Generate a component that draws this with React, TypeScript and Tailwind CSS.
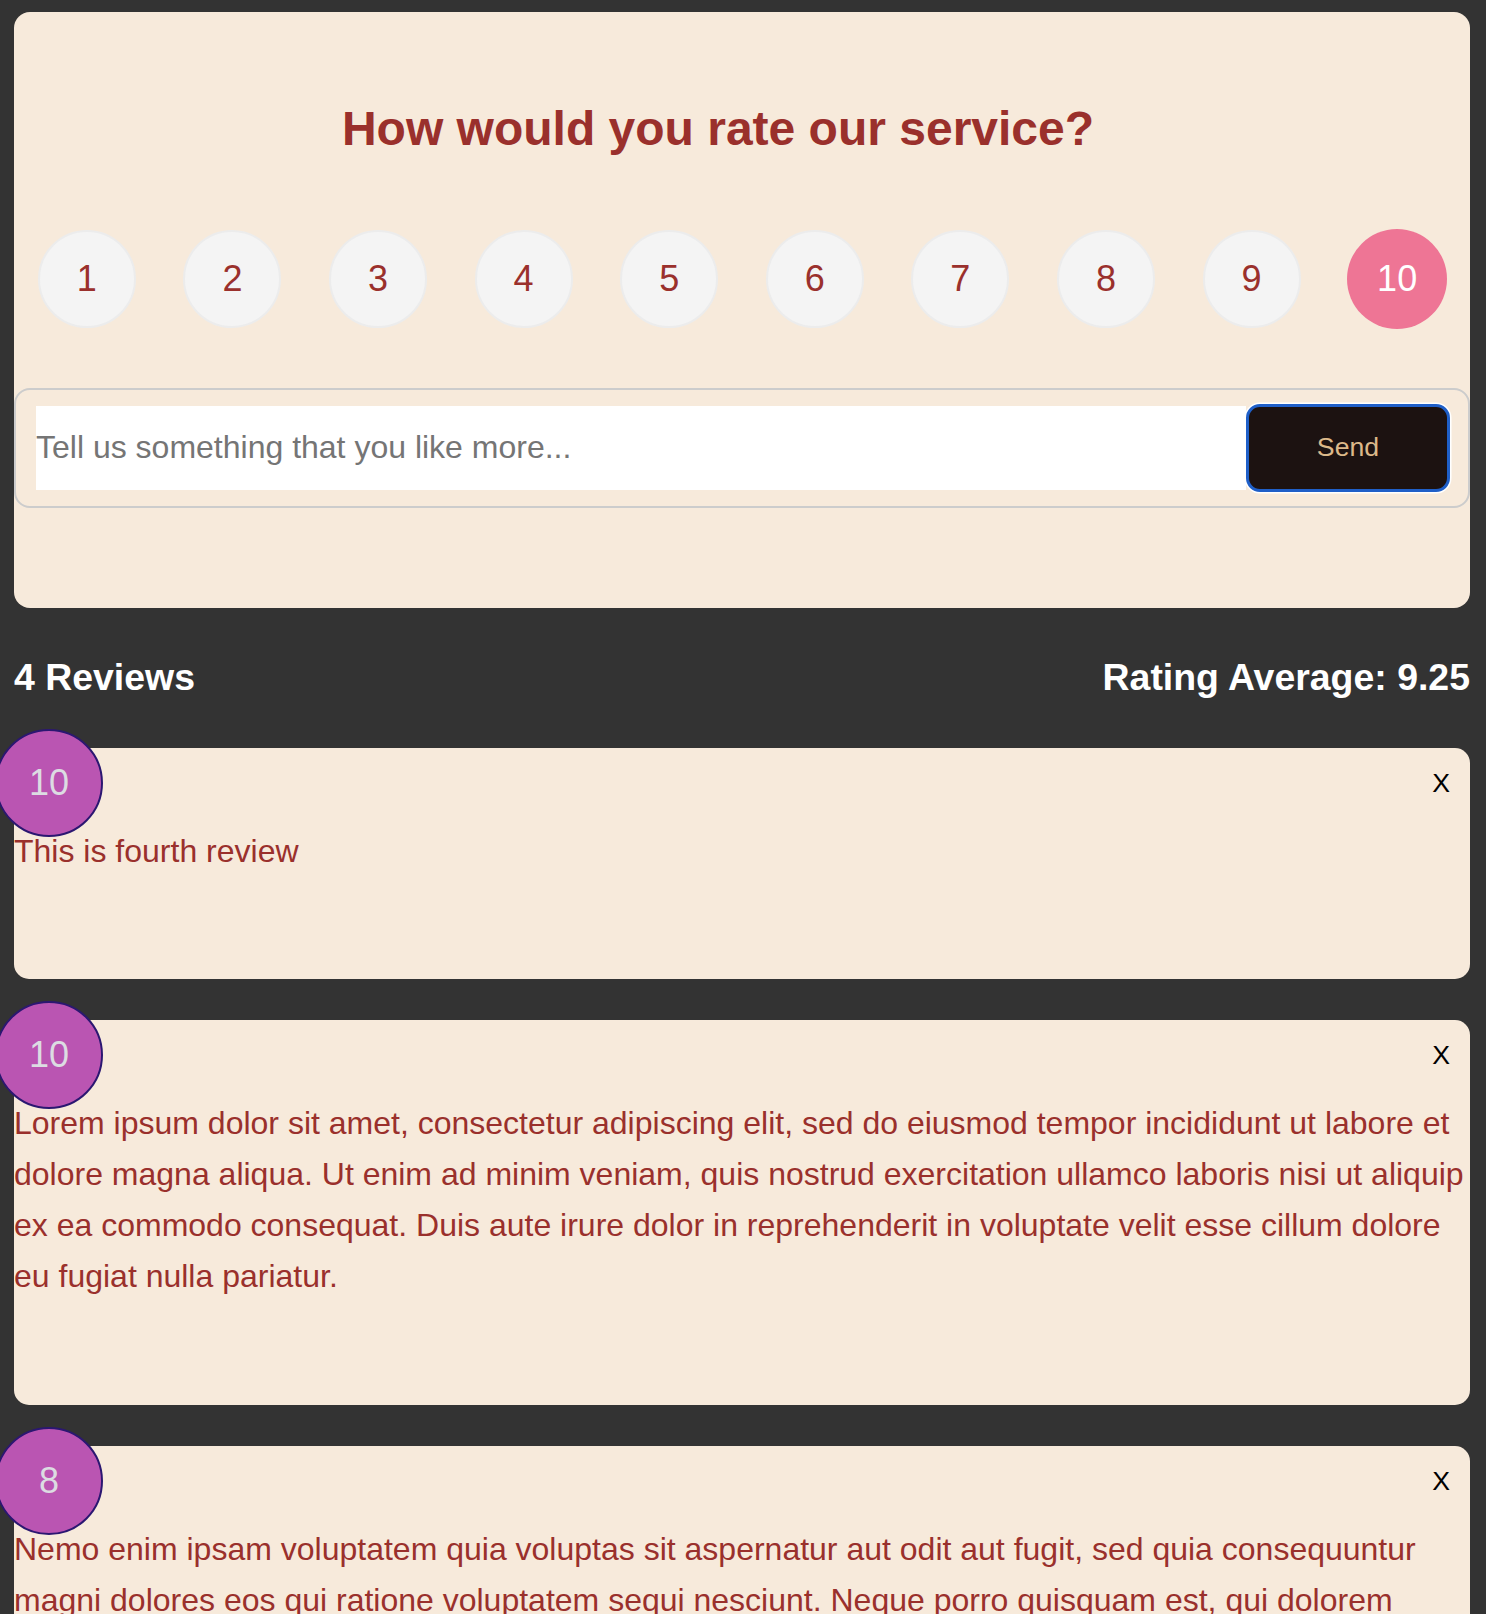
import { useState } from "react";

const initialReviews = [
  { id: 4, rating: 10, text: "This is fourth review" },
  {
    id: 3,
    rating: 10,
    text: "Lorem ipsum dolor sit amet, consectetur adipiscing elit, sed do eiusmod tempor incididunt ut labore et dolore magna aliqua. Ut enim ad minim veniam, quis nostrud exercitation ullamco laboris nisi ut aliquip ex ea commodo consequat. Duis aute irure dolor in reprehenderit in voluptate velit esse cillum dolore eu fugiat nulla pariatur.",
  },
  {
    id: 2,
    rating: 8,
    text: "Nemo enim ipsam voluptatem quia voluptas sit aspernatur aut odit aut fugit, sed quia consequuntur magni dolores eos qui ratione voluptatem sequi nesciunt. Neque porro quisquam est, qui dolorem ipsum quia dolor sit amet, consectetur, adipisci velit, sed quia non numquam eius modi tempora incidunt ut labore et dolore magnam aliquam quaerat voluptatem.",
  },
  { id: 1, rating: 9, text: "This is the first review of the service" },
];

export default function App() {
  const [reviews, setReviews] = useState(initialReviews);
  const [selected, setSelected] = useState(10);
  const [text, setText] = useState("");

  const average =
    reviews.length === 0
      ? 0
      : reviews.reduce((acc, r) => acc + r.rating, 0) / reviews.length;

  return (
    <div className="min-h-screen bg-[#333333] pl-[14px] pr-[16px] pt-[12px] pb-[40px] font-['Liberation_Sans',Arial,sans-serif] leading-[1.6]">
      {/* Feedback form */}
      <div className="rounded-[16px] bg-[#f7eadb] pt-[79px] pb-[100px]">
        <h2 className="pr-[48px] text-center text-[48px] font-bold leading-[1.6] text-[#9a302c]">
          How would you rate our service?
        </h2>

        <ul className="mt-[62px] mb-[60px] flex items-center justify-around">
          {Array.from({ length: 10 }, (_, i) => i + 1).map((n) => (
            <li key={n} className="flex h-[98px] w-[98px] items-center justify-center">
              <button
                onClick={() => setSelected(n)}
                className={
                  n === selected
                    ? "-m-px flex h-[100px] w-[100px] shrink-0 items-center justify-center rounded-full bg-[#ee7595] text-[36px] text-white"
                    : "flex h-[98px] w-[98px] shrink-0 items-center justify-center rounded-full border-2 border-[#ececec] bg-[#f4f4f4] text-[36px] text-[#9a302c]"
                }
              >
                {n}
              </button>
            </li>
          ))}
        </ul>

        <div className="flex items-center rounded-[16px] border-2 border-[#cccccc] py-[14px] pl-[20px] pr-[18px]">
          <input
            type="text"
            value={text}
            onChange={(e) => setText(e.target.value)}
            placeholder="Tell us something that you like more..."
            className="h-[84px] min-w-0 flex-1 bg-white text-[32px] text-[#333333] outline-none placeholder:text-[#757575]"
          />
          <button className="h-[88px] w-[204px] shrink-0 rounded-[14px] border-[3px] border-[#1f5fc8] bg-[#1c1211] text-[26.67px] text-[#dcb98a] shadow-[0_0_0_1.5px_#ffffff]">
            Send
          </button>
        </div>
      </div>

      {/* Stats */}
      <div className="my-[40px] flex items-center justify-between text-[37.44px] font-bold leading-[1.6] text-white">
        <h3>{reviews.length} Reviews</h3>
        <h3>Rating Average: {average.toFixed(2).replace(/\.?0+$/, "")}</h3>
      </div>

      {/* Review list */}
      <div>
        {reviews.map((r) => (
          <div
            key={r.id}
            className="relative mb-[41px] rounded-[15px] bg-[#f7eadb] pt-[78px] pb-[102px] text-[32px] leading-[1.6] text-[#9a302c]"
          >
            <div className="absolute -left-[19px] -top-[19px] flex h-[108px] w-[108px] items-center justify-center rounded-full border-2 border-[#2b1771] bg-[#ba55b2] text-[36px] text-[#dcdce2]">
              {r.rating}
            </div>
            <button
              onClick={() => setReviews(reviews.filter((x) => x.id !== r.id))}
              className="absolute right-[20px] top-[20px] p-0 text-[26.67px] leading-[30px] text-black"
            >
              X
            </button>
            <p>{r.text}</p>
          </div>
        ))}
      </div>
    </div>
  );
}
